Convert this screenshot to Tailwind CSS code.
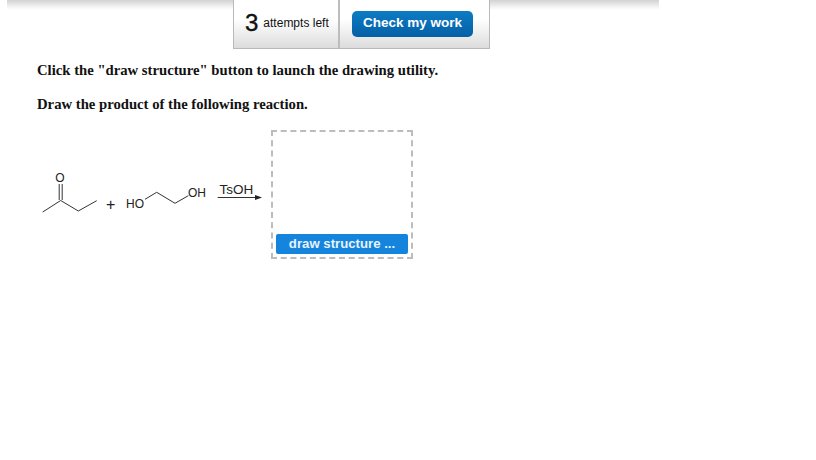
<!DOCTYPE html>
<html lang="en">
<head>
    <meta charset="UTF-8">
    <title>Draw the product</title>
    <script src="https://cdn.jsdelivr.net/npm/@tailwindcss/browser@4"></script>
</head>
<body class="bg-white overflow-hidden">
    <div class="w-[816px] h-[460px] bg-white">
        <header class="ml-[7px] w-[652px] h-[48px] bg-[linear-gradient(to_bottom,#d2d2d2_0px,#f4f4f4_7px,#ffffff_10px)]">
            <div class="ml-[226px] w-[257px] h-[49px] flex border-x border-b border-[#b9b9b9] bg-gradient-to-b from-white from-40% to-[#dcdcdc]">
                <div class="w-[106px] border-r-2 border-[#bdbdbd] flex items-center pl-[11px] pb-[2px] font-['Liberation_Sans',sans-serif] text-[#111]">
                    <span class="text-[24px] leading-none [-webkit-text-stroke:0.4px_#111]">3</span>
                    <span class="text-[12px] ml-[5px]">attempts left</span>
                </div>
                <div class="flex-1 pl-[12px] pt-[11px]">
                    <button class="block w-[121px] h-[26px] pb-[1px] rounded-[5px] bg-gradient-to-b from-[#0d7cc4] to-[#0560a6] text-white font-bold text-[13.5px] font-['Liberation_Sans',sans-serif]">Check my work</button>
                </div>
            </div>
        </header>

        <main class="pl-[37px] font-['Liberation_Serif',serif] font-bold text-[14.7px] text-[#111]">
            <p class="pt-[14px] leading-[16px]">Click the "draw structure" button to launch the drawing utility.</p>
            <p class="pt-[18px] leading-[16px]">Draw the product of the following reaction.</p>

            <div class="flex mt-[18px] -ml-[37px]">
                <svg width="271" height="129" viewBox="0 130 271 129" class="shrink-0 font-['Liberation_Sans',sans-serif] font-normal">
                    <g fill="none" stroke="#333" stroke-width="1">
                        <path d="M42.7 212 L60.7 200.5 L78.3 211 L96.7 200.7" />
                        <path d="M59.2 200 V184 M62.2 200 V184" />
                        <path d="M145 199.3 L156.7 192.3 L175 203.3 L188.3 195.7" />
                        <path d="M217.7 197.5 H256" />
                    </g>
                    <path d="M255 195 L262 197.5 L255 200 Z" fill="#222" />
                    <g fill="#222" font-size="12">
                        <text x="60" y="181.5" text-anchor="middle">O</text>
                        <text x="106" y="210" font-size="16">+</text>
                        <text x="126" y="207.5">HO</text>
                        <text x="188" y="196.5">OH</text>
                        <text x="219.5" y="194" font-size="13.5">TsOH</text>
                    </g>
                </svg>
                <div class="w-[142px] h-[129px] border-2 border-dashed border-[#bcbcbc] flex items-end justify-center pb-[3px]">
                    <button class="w-[132px] h-[20px] rounded-[2px] bg-[#1484dc] text-[#e8f3fc] font-bold text-[13.2px] leading-[20px] font-['Liberation_Sans',sans-serif]">draw structure ...</button>
                </div>
            </div>
        </main>
    </div>
</body>
</html>
